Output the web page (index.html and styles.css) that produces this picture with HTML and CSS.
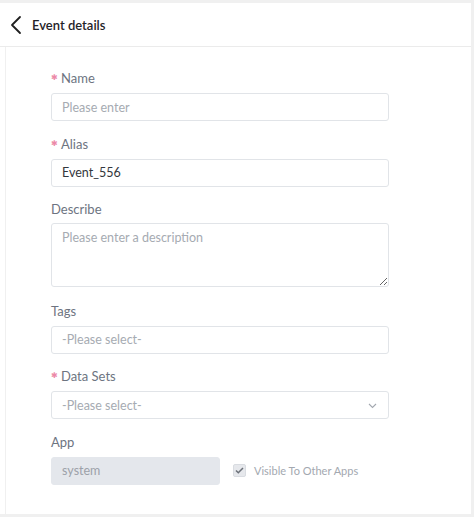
FILE: index.html
```html
<!DOCTYPE html>
<html>
<head>
<meta charset="utf-8">
<link rel="stylesheet" href="styles.css">
</head>
<body>
<div class="page">
  <div class="header">
    <svg class="back" width="14" height="20" viewBox="0 0 14 20"><polyline points="11,2 3,10 11,18" fill="none" stroke="#1f1f1f" stroke-width="1.8" stroke-linecap="round" stroke-linejoin="round"/></svg>
    <span class="title">Event details</span>
  </div>
  <div class="panel">
    <form class="form">
      <div class="field">
        <label class="label"><span class="req">✱</span>Name</label>
        <input class="input" type="text" placeholder="Please enter">
      </div>
      <div class="field">
        <label class="label"><span class="req">✱</span>Alias</label>
        <input class="input" type="text" value="Event_556">
      </div>
      <div class="field">
        <label class="label">Describe</label>
        <textarea class="textarea" placeholder="Please enter a description"></textarea>
      </div>
      <div class="field">
        <label class="label">Tags</label>
        <div class="input select">-Please select-</div>
      </div>
      <div class="field">
        <label class="label"><span class="req">✱</span>Data Sets</label>
        <div class="input select">-Please select-
          <svg class="chev" width="9" height="6" viewBox="0 0 9 6"><polyline points="1,1 4.5,4.5 8,1" fill="none" stroke="#a3a8b0" stroke-width="1.1"/></svg>
        </div>
      </div>
      <div class="field">
        <label class="label">App</label>
        <div class="row">
          <div class="input disabled">system</div>
          <div class="check">
            <span class="box"><svg width="9" height="7" viewBox="0 0 9 7"><polyline points="1,3.5 3.3,5.8 8,1" fill="none" stroke="#6b7078" stroke-width="1.5"/></svg></span>
            <span class="check-label">Visible To Other Apps</span>
          </div>
        </div>
      </div>
    </form>
  </div>
</div>
</body>
</html>
```
FILE: styles.css
```css
html, body {
  margin: 0;
  padding: 0;
}
body {
  background: #f0f0f0;
  font-family: Lato, "Open Sans", sans-serif;
  width: 474px;
  height: 517px;
  overflow: hidden;
}
.page {
  margin-top: 3px;
  width: 471px;
  height: 511px;
  background: #fff;
  display: flex;
  flex-direction: column;
}
.header {
  border-bottom: 1px solid #ebebeb;
  display: flex;
  align-items: center;
  padding-left: 9px;
  box-sizing: border-box;
  height: 44px;
}
.back {
  display: block;
  margin-right: 9px;
}
.title {
  font-size: 13px;
  font-weight: 600;
  color: #1f2329;
}
.panel {
  flex: 1;
  margin-left: 5px;
  border-left: 1px solid #f0f0f0;
  padding-left: 45px;
  padding-top: 21px;
}
.form {
  margin: 0;
  width: 338px;
}
.field {
  margin-bottom: 12.5px;
}
.label {
  display: block;
  height: 20px;
  line-height: 20px;
  margin-bottom: 5px;
  font-size: 13px;
  color: #6d7481;
}
.req {
  display: inline-block;
  color: #ec8aa8;
  font-family: "DejaVu Sans", sans-serif;
  font-size: 8px;
  line-height: 20px;
  width: 10px;
  vertical-align: top;
}
.input {
  display: flex;
  align-items: center;
  box-sizing: border-box;
  width: 338px;
  height: 28px;
  margin: 0;
  padding: 0 10px;
  border: 1px solid #e1e4e8;
  border-radius: 3px;
  font-family: inherit;
  font-size: 12.5px;
  color: #33373d;
  background: #fff;
  outline: none;
}
.input::placeholder,
.textarea::placeholder {
  color: #a6abb2;
}
.select {
  color: #a6abb2;
  position: relative;
}
.chev {
  position: absolute;
  right: 11px;
  top: 11px;
}
.textarea {
  display: block;
  box-sizing: border-box;
  width: 338px;
  height: 64px;
  margin: 0 0 3px 0;
  padding: 6px 10px;
  border: 1px solid #e1e4e8;
  border-radius: 3px;
  font-family: inherit;
  font-size: 12.5px;
  color: #33373d;
  outline: none;
  position: relative;
  top: -1px;
}
.row {
  display: flex;
  align-items: center;
}
.disabled {
  width: 169px;
  background: #e4e7ec;
  border-color: #e4e7ec;
  color: #9ca1a9;
}
.check {
  display: flex;
  align-items: center;
  margin-left: 13px;
}
.box {
  width: 13px;
  height: 13px;
  box-sizing: border-box;
  border: 1px solid #d9dce1;
  background: #e6e8ec;
  border-radius: 2px;
  display: flex;
  align-items: center;
  justify-content: center;
  margin-right: 8px;
}
.box svg {
  display: block;
}
.check-label {
  font-size: 11px;
  color: #a3a8b0;
}
```
